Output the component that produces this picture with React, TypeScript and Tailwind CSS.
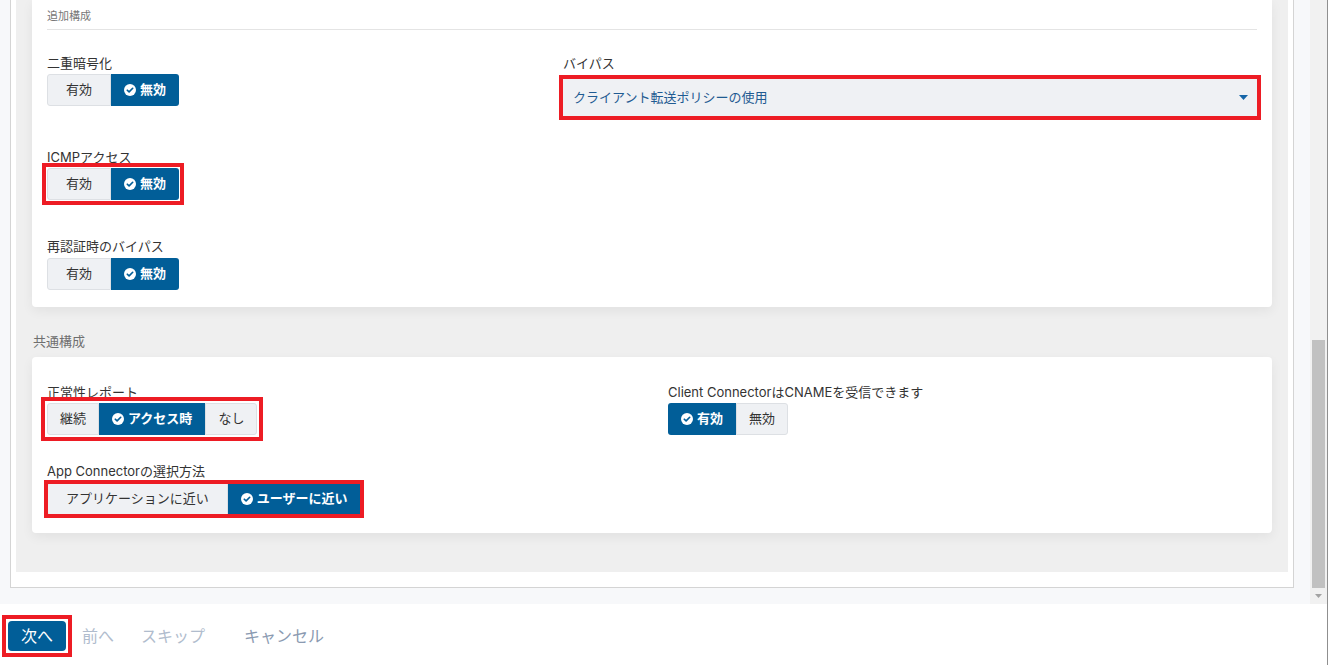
type Opt = { label: string; on?: boolean; cls: string }

function Check() {
  return (
    <svg width="12" height="12" viewBox="0 0 16 16" className="shrink-0">
      <circle cx="8" cy="8" r="8" fill="#fff" />
      <path d="M4.4 8.3l2.4 2.3 4.8-4.9" stroke="#015e98" strokeWidth="2.2" fill="none" strokeLinecap="round" strokeLinejoin="round" />
    </svg>
  )
}

function Toggle({ opts, ring = '' }: { opts: Opt[]; ring?: string }) {
  return (
    <div className={`inline-flex h-8 ${ring}`}>
      {opts.map((o) =>
        o.on ? (
          <span
            key={o.label}
            className={`inline-flex items-center justify-center gap-1 bg-[#015e98] px-[13px] text-[13px] font-bold text-white first:rounded-l-[3px] last:rounded-r-[3px] ${o.cls}`}
          >
            <Check />
            {o.label}
          </span>
        ) : (
          <span
            key={o.label}
            className={`inline-flex items-center justify-center border border-[#dde0e4] bg-[#eff1f4] text-[13px] text-[#333] first:rounded-l-[3px] last:rounded-r-[3px] ${o.cls}`}
          >
            {o.label}
          </span>
        ),
      )}
    </div>
  )
}

function Field({ label, gap = 'mt-px', children }: { label: string; gap?: string; children: React.ReactNode }) {
  return (
    <div className="flex flex-col items-start">
      <div className="text-[13px] leading-5 text-[#333]">{label}</div>
      <div className={gap}>{children}</div>
    </div>
  )
}

const ring = 'outline-4 outline-[#ed1c24]'

const onOff = (on: boolean): Opt[] => [
  { label: '有効', on: on, cls: on ? '' : 'min-w-16 px-3' },
  { label: '無効', on: !on, cls: on ? 'min-w-16 px-3' : '' },
]

export default function App() {
  return (
    <div className="flex h-[665px] w-[1328px] flex-col overflow-hidden border-r border-[#8f8f8f] bg-white font-['Inter','Noto_Sans_CJK_JP',sans-serif] text-[#333]">
      <div className="flex h-[604px]">
        <main className="flex-1 bg-[#f7f8fa] pl-[10px] pr-4">
          <div className="h-[588px] border-x border-b border-[#d4d4d4] bg-white px-[5px] pb-[15px]">
            <div className="h-full overflow-hidden bg-[#efefef] px-4">
              <section className="rounded-b bg-white px-[15px] pt-2 pb-[17px] shadow-[0_4px_12px_rgba(0,0,0,0.06)]">
                <div className="border-b border-[#e4e4e4] pb-[5px] text-[11px] leading-4 text-[#777]">追加構成</div>
                <div className="mt-[23px] grid grid-cols-[516px_1fr]">
                  <div className="flex flex-col">
                    <Field label="二重暗号化">
                      <Toggle opts={onOff(false)} />
                    </Field>
                    <div className="mt-[41px]">
                      <Field label="ICMPアクセス">
                        <Toggle opts={onOff(false)} ring={`${ring} outline-offset-1`} />
                      </Field>
                    </div>
                    <div className="mt-[36px]">
                      <Field label="再認証時のバイパス" gap="mt-[2px]">
                        <Toggle opts={onOff(false)} />
                      </Field>
                    </div>
                  </div>
                  <div className="flex flex-col">
                    <div className="text-[13px] leading-5 text-[#333]">バイパス</div>
                    <div className={`mt-[6px] flex h-[37px] items-center justify-between bg-[#eff1f4] pr-[9px] pl-[10px] ${ring} outline-offset-0`}>
                      <span className="text-[13px] text-[#1f5b92]">クライアント転送ポリシーの使用</span>
                      <svg width="9" height="5" viewBox="0 0 9 5">
                        <path d="M0 0h9L4.5 5z" fill="#1565a8" />
                      </svg>
                    </div>
                  </div>
                </div>
              </section>

              <div className="mt-[24px] pl-px text-[13px] leading-5 text-[#6f6f6f]">共通構成</div>

              <section className="mt-[6px] rounded bg-white px-[15px] pt-[25px] pb-[18px] shadow-[0_4px_12px_rgba(0,0,0,0.06)]">
                <div className="grid grid-cols-[621px_1fr]">
                  <div className="flex flex-col">
                    <Field label="正常性レポート">
                      <Toggle
                        ring={`${ring} outline-offset-2`}
                        opts={[
                          { label: '継続', cls: 'px-3' },
                          { label: 'アクセス時', on: true, cls: '' },
                          { label: 'なし', cls: 'px-3' },
                        ]}
                      />
                    </Field>
                    <div className="mt-[26px]">
                      <Field label="App Connectorの選択方法" gap="mt-[2px]">
                        <Toggle
                          ring={`${ring} -outline-offset-1`}
                          opts={[
                            { label: 'アプリケーションに近い', cls: 'px-[18px]' },
                            { label: 'ユーザーに近い', on: true, cls: '' },
                          ]}
                        />
                      </Field>
                    </div>
                  </div>
                  <div>
                    <Field label="Client ConnectorはCNAMEを受信できます">
                      <Toggle
                        opts={[
                          { label: '有効', on: true, cls: '' },
                          { label: '無効', cls: 'px-3' },
                        ]}
                      />
                    </Field>
                  </div>
                </div>
              </section>
            </div>
          </div>
        </main>

        <div className="flex w-[17px] flex-col bg-[#f1f1f1]">
          <div className="mx-[2px] mt-[340px] h-[248px] bg-[#c1c1c1]" />
          <div className="flex flex-1 items-center justify-center">
            <svg width="7" height="4" viewBox="0 0 7 4">
              <path d="M0 0h7L3.5 4z" fill="#a3a3a3" />
            </svg>
          </div>
        </div>
      </div>

      <footer className="flex flex-1 items-start bg-white pt-[17px] pl-2">
        <div className="flex h-[30px] items-center text-base">
          <span className={`flex ${ring} outline-offset-2`}>
            <button className="flex h-[30px] items-center rounded-[4px] bg-[#015e98] px-[13px] text-white">次へ</button>
          </span>
          <span className="ml-4 text-[#b0bccd]">前へ</span>
          <span className="ml-[27px] text-[#b0bccd]">スキップ</span>
          <span className="ml-[39px] text-[#8a9ab1]">キャンセル</span>
        </div>
      </footer>
    </div>
  )
}
